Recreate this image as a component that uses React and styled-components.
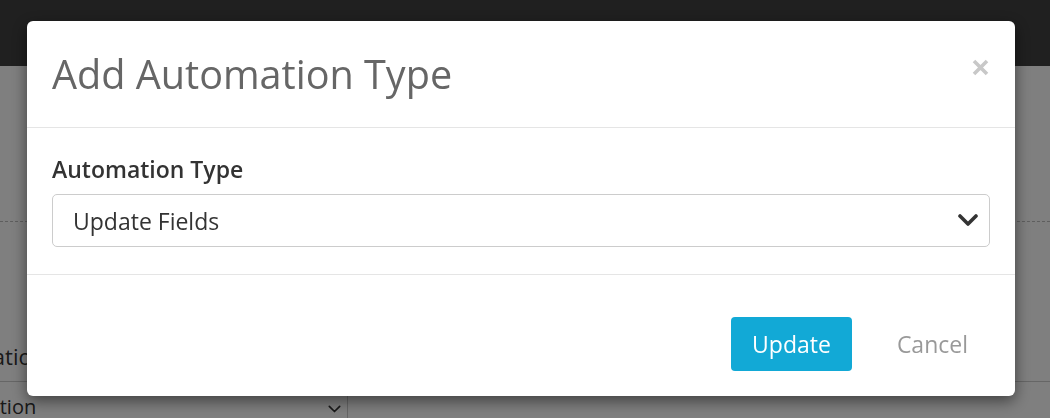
import React from 'react'
import styled, { createGlobalStyle } from 'styled-components'

const GlobalStyle = createGlobalStyle`
  html, body {
    margin: 0;
    padding: 0;
    overflow: hidden;
    background: #fff;
  }
  body {
    font-family: "Open Sans", "Liberation Sans", sans-serif;
    color: #333;
  }
  * { box-sizing: border-box; }
`

// ---- page behind the modal ----
const Page = styled.div`
  width: 1050px;
  height: 418px;
  overflow: hidden;
  display: flex;
  flex-direction: column;
`

const Navbar = styled.div`
  height: 66px;
  flex: none;
  background: #404040;
`

const TopSection = styled.div`
  height: 156px;
  flex: none;
  border-bottom: 1px dashed #bdbdbd;
`

const SectionTitle = styled.h2`
  margin: 118px 0 0 -76px;
  font-size: 22px;
  font-weight: 400;
  line-height: 32px;
  color: #333;
`

const Row = styled.div`
  margin-top: 9px;
  display: flex;
  border-top: 1px solid #ccc;
  height: 60px;
`

const Cell = styled.div`
  width: 348px;
  border-right: 1px solid #ccc;
  display: flex;
  align-items: flex-start;
  justify-content: space-between;
  padding: 10px 6px 0 0;
  font-size: 20px;
  line-height: 30px;
  color: #333;
  span { margin-left: -74px; }
  svg { margin-top: 13px; }
`

// ---- modal ----
const Backdrop = styled.div`
  position: fixed;
  inset: 0;
  background: rgba(0, 0, 0, 0.5);
  padding: 21px 0 0 27px;
`

const Modal = styled.div`
  width: 988px;
  background: #fff;
  border-radius: 6px;
  box-shadow: 0 5px 15px rgba(0, 0, 0, 0.5);
`

const Header = styled.div`
  height: 107px;
  padding: 0 26px 0 25px;
  display: flex;
  align-items: center;
  justify-content: space-between;
  border-bottom: 1px solid #e5e5e5;
`

const Title = styled.h4`
  margin: 0;
  font-size: 39.6px;
  font-weight: 400;
  color: #666;
  line-height: 48px;
  padding-bottom: 1px;
`

const CloseButton = styled.button`
  border: 0;
  background: none;
  padding: 0;
  cursor: pointer;
  display: flex;
  margin-top: -13px;
`

const Body = styled.div`
  padding: 26px 25px 27px;
  border-bottom: 1px solid #e5e5e5;
`

const Label = styled.label`
  display: block;
  font-size: 23px;
  line-height: 30px;
  font-weight: 600;
  color: #333;
  margin-bottom: 10px;
`

const SelectWrap = styled.div`
  position: relative;
  svg {
    position: absolute;
    right: 12px;
    top: 20px;
    pointer-events: none;
  }
`

const Select = styled.select`
  appearance: none;
  width: 100%;
  height: 53px;
  border: 1px solid #ccc;
  border-radius: 5px;
  background: #fff;
  padding: 0 20px;
  font-family: inherit;
  font-size: 23px;
  color: #333;
  outline: none;
`

const Footer = styled.div`
  padding: 42px 26px 25px;
  display: flex;
  justify-content: flex-end;
  align-items: center;
  gap: 24px;
`

const Button = styled.button`
  height: 54px;
  padding: 0 21px;
  border: 0;
  border-radius: 4px;
  font-family: inherit;
  font-size: 23px;
  cursor: pointer;
  background: ${p => (p.$primary ? '#12a9d6' : 'transparent')};
  color: ${p => (p.$primary ? '#fff' : '#999')};
`

const Chevron = ({ color = '#333', w = 20, sw = 3.6 }) => (
  <svg width={w} height={w * 0.62} viewBox="0 0 20 12.4" fill="none">
    <path d="M2 2 L10 10 L18 2" stroke={color} strokeWidth={sw} strokeLinecap="round" strokeLinejoin="round" />
  </svg>
)

export default function App() {
  return (
    <>
      <GlobalStyle />
      <Page>
        <Navbar />
        <TopSection />
        <SectionTitle>Automation</SectionTitle>
        <Row>
          <Cell>
            <span>Automation</span>
            <Chevron w={13} sw={2.6} />
          </Cell>
        </Row>
      </Page>
      <Backdrop>
        <Modal>
          <Header>
            <Title>Add Automation Type</Title>
            <CloseButton aria-label="Close">
              <svg width="17" height="17" viewBox="0 0 17 17">
                <path d="M2 2 L15 15 M15 2 L2 15" stroke="#c8c8c8" strokeWidth="3.6" />
              </svg>
            </CloseButton>
          </Header>
          <Body>
            <Label>Automation Type</Label>
            <SelectWrap>
              <Select defaultValue="update">
                <option value="update">Update Fields</option>
              </Select>
              <Chevron />
            </SelectWrap>
          </Body>
          <Footer>
            <Button $primary>Update</Button>
            <Button>Cancel</Button>
          </Footer>
        </Modal>
      </Backdrop>
    </>
  )
}
